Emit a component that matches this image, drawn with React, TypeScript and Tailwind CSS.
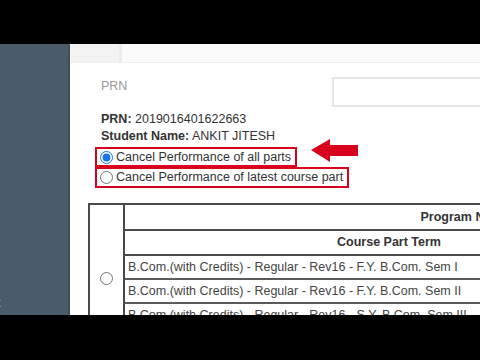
import React from 'react';

const ROWS = [
  'B.Com.(with Credits) - Regular - Rev16 - F.Y. B.Com. Sem I',
  'B.Com.(with Credits) - Regular - Rev16 - F.Y. B.Com. Sem II',
  'B.Com.(with Credits) - Regular - Rev16 - S.Y. B.Com. Sem III',
  'B.Com.(with Credits) - Regular - Rev16 - S.Y. B.Com. Sem IV',
];

function RedArrow() {
  return (
    <svg width="48" height="24" viewBox="0 0 48 24" className="absolute left-[311px] top-[139px]">
      <polygon points="0,11 19,0 19,6 47,6 47,17 19,17 19,23" fill="#d8001c" />
    </svg>
  );
}

export default function App() {
  return (
    <div className="relative w-[480px] h-[360px] overflow-hidden bg-black flex flex-col font-['Liberation_Sans',Arial,sans-serif] text-[12.5px] text-[#333]">
      {/* top letterbox */}
      <div className="h-[44px] shrink-0" />

      <div className="h-[271px] shrink-0 flex">
        {/* sidebar */}
        <div className="w-[70px] shrink-0 bg-[#4a5c69] border-r-2 border-[#3f4f5a] flex flex-col justify-end pb-[6px]">
          <span className="text-white text-[12px] leading-none -ml-[3px]">t</span>
        </div>

        {/* main */}
        <div className="flex-1 bg-white overflow-hidden">
          {/* tab strip */}
          <div className="h-[19px] flex border-b border-[#efefef]">
            <div className="w-[52px] bg-[#f3f3f3] border-r-[3px] border-[#ececec]" />
            <div className="flex-1 bg-[#fafafa]" />
          </div>

          <div className="pl-[31px]">
            {/* PRN search */}
            <div className="mt-[14px] flex items-start h-[30px]">
              <span className="w-[231px] shrink-0 text-[#9a9a9a]">PRN</span>
              <div className="w-[300px] shrink-0 h-[30px] border-2 border-[#e6e6e6] bg-white" />
            </div>

            <div className="mt-[4px] leading-[17px]">
              <div><span className="font-bold">PRN:</span> 2019016401622663</div>
              <div><span className="font-bold">Student Name:</span> ANKIT JITESH</div>
            </div>

            {/* options */}
            <div className="-ml-[6px] mt-[2px] flex flex-col items-start">
              <label className="h-[20px] flex items-center gap-[3px] border-2 border-[#d8001c] pl-[3px] pr-[4px]">
                <input type="radio" name="opt" defaultChecked className="m-0 w-[13px] h-[13px] accent-[#1a73e8]" />
                <span>Cancel Performance of all parts</span>
              </label>
              <label className="h-[21px] flex items-center gap-[3px] border-2 border-[#d8001c] pl-[3px] pr-[4px]">
                <input type="radio" name="opt" className="m-0 w-[13px] h-[13px]" />
                <span>Cancel Performance of latest course part</span>
              </label>
            </div>
          </div>

          {/* course table */}
          <div className="ml-[18px] mt-[15px] flex w-[700px] border-t-2 border-l-2 border-[#4a4a4a]">
            <div className="w-[35px] shrink-0 border-r-2 border-[#4a4a4a] flex items-center justify-center">
              <input type="radio" name="course" className="m-0 w-[13px] h-[13px]" />
            </div>
            <div className="flex-1 flex flex-col">
              <div className="h-[26px] border-b-2 border-[#4a4a4a] flex items-center">
                <span className="w-[680px] text-center font-bold">Program Name</span>
              </div>
              <div className="h-[25px] border-b-2 border-[#4a4a4a] flex items-center">
                <span className="w-[528px] text-center font-bold">Course Part Term</span>
              </div>
              {ROWS.map(r => (
                <div key={r} className="h-[24px] border-b-2 border-[#5a5a5a] flex items-center pl-[3px] text-[#444]">
                  {r}
                </div>
              ))}
            </div>
          </div>
        </div>
      </div>

      {/* bottom letterbox */}
      <div className="flex-1" />

      <RedArrow />
    </div>
  );
}
